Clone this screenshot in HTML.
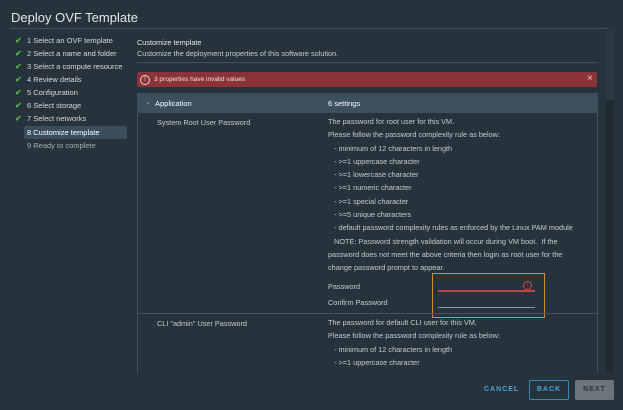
<!DOCTYPE html>
<html><head><style>
body{margin:0;width:623px;height:410px;background:#26333c;font-family:"Liberation Sans",sans-serif;color:#c9d1d6;overflow:hidden;position:relative}
.a{position:absolute;white-space:nowrap}
.s{font-size:7.5px;color:#d5dadd}
.ck{color:#5cb34a;font-size:8px;font-weight:bold}
.t{font-size:7.3px;color:#c5ccd1}
</style></head><body>
<div class="a" style="left:11px;top:10px;font-size:13px;color:#e3e7ea">Deploy OVF Template</div>
<div class="a" style="left:10px;top:28px;width:598px;height:1px;background:#44525c"></div>
<div class="a" style="left:24px;top:126px;width:103px;height:13px;background:#3a4e5e;border-radius:2px"></div>
<div class="a ck" style="left:15px;top:36px">✔</div><div class="a s" style="left:27px;top:36px">1 Select an OVF template</div>
<div class="a ck" style="left:15px;top:49px">✔</div><div class="a s" style="left:27px;top:49px">2 Select a name and folder</div>
<div class="a ck" style="left:15px;top:62px">✔</div><div class="a s" style="left:27px;top:62px">3 Select a compute resource</div>
<div class="a ck" style="left:15px;top:75px">✔</div><div class="a s" style="left:27px;top:75px">4 Review details</div>
<div class="a ck" style="left:15px;top:88px">✔</div><div class="a s" style="left:27px;top:88px">5 Configuration</div>
<div class="a ck" style="left:15px;top:101px">✔</div><div class="a s" style="left:27px;top:101px">6 Select storage</div>
<div class="a ck" style="left:15px;top:114px">✔</div><div class="a s" style="left:27px;top:114px">7 Select networks</div>
<div class="a s" style="left:27px;top:128px;color:#fff">8 Customize template</div>
<div class="a s" style="left:27px;top:141px;color:#a7b0b6">9 Ready to complete</div>

<div class="a" style="left:137px;top:38px;font-size:7.3px;color:#e3e7ea">Customize template</div>
<div class="a t" style="left:137px;top:49px">Customize the deployment properties of this software solution.</div>
<div class="a" style="left:137px;top:62px;width:460px;height:1px;background:#44525c"></div>
<div class="a" style="left:137px;top:72px;width:460px;height:15px;background:#8a3338;border-radius:2px"></div>
<div class="a" style="left:140px;top:75px;width:8px;height:8px;border:1px solid #f0d0d0;border-radius:50%;font-size:7px;color:#f0d0d0;text-align:center;line-height:8px">!</div>
<div class="a" style="left:154px;top:76px;font-size:6.5px;color:#f2e0e0">3 properties have invalid values</div>
<div class="a" style="left:587px;top:73px;font-size:10px;color:#e8c8c8">×</div>

<div class="a" style="left:137px;top:93px;width:459px;height:280px;border:1px solid #44535e;border-bottom:none"></div>
<div class="a" style="left:137px;top:93px;width:461px;height:20px;background:#3b4f5f"></div>
<div class="a" style="left:145px;top:98px;font-size:7px;color:#aab">⌄</div>
<div class="a" style="left:155px;top:99px;font-size:7.5px;color:#fff">Application</div>
<div class="a" style="left:328px;top:99px;font-size:7.5px;color:#fff">6 settings</div>
<div class="a t" style="left:157px;top:118px">System Root User Password</div>
<div class="a t" style="left:328px;top:115px;line-height:13.3px">The password for root user for this VM.<br>Please follow the password complexity rule as below:<br>&nbsp;&nbsp;&nbsp;- minimum of 12 characters in length<br>&nbsp;&nbsp;&nbsp;- &gt;=1 uppercase character<br>&nbsp;&nbsp;&nbsp;- &gt;=1 lowercase character<br>&nbsp;&nbsp;&nbsp;- &gt;=1 numeric character<br>&nbsp;&nbsp;&nbsp;- &gt;=1 special character<br>&nbsp;&nbsp;&nbsp;- &gt;=5 unique characters<br>&nbsp;&nbsp;&nbsp;- default password complexity rules as enforced by the Linux PAM module<br>&nbsp;&nbsp;&nbsp;NOTE: Password strength validation will occur during VM boot.&nbsp; If the<br>password does not meet the above criteria then login as root user for the<br>change password prompt to appear.</div>
<div class="a t" style="left:328px;top:282px">Password</div>
<div class="a t" style="left:328px;top:298px">Confirm Password</div>
<div class="a" style="left:432px;top:273px;width:111px;height:43px;border:1.5px solid #e08a22"></div>
<div class="a" style="left:438px;top:290px;width:97px;height:1.5px;background:#c0473f"></div>
<div class="a" style="left:523px;top:281px;width:7px;height:7px;border:1px solid #d6493f;border-radius:50%;font-size:6px;color:#d6493f;text-align:center;line-height:7px">!</div>
<div class="a" style="left:438px;top:307px;width:97px;height:1px;background:#8a969e"></div>
<div class="a" style="left:137px;top:313px;width:460px;height:1px;background:#44535e"></div>
<div class="a t" style="left:157px;top:319px">CLI "admin" User Password</div>
<div class="a t" style="left:328px;top:316px;line-height:13.3px">The password for default CLI user for this VM.<br>Please follow the password complexity rule as below:<br>&nbsp;&nbsp;&nbsp;- minimum of 12 characters in length<br>&nbsp;&nbsp;&nbsp;- &gt;=1 uppercase character</div>
<div class="a" style="left:137px;top:373px;width:461px;height:37px;background:#26333c"></div>
<div class="a" style="left:606px;top:30px;width:8px;height:343px;background:#1f2a31"></div>
<div class="a" style="left:606px;top:30px;width:8px;height:70px;background:#2c3942"></div>

<div class="a" style="left:484px;top:386px;font-size:7px;letter-spacing:1px;color:#4aa3d8;font-weight:bold">CANCEL</div>
<div class="a" style="left:529px;top:380px;width:38px;height:18px;border:1px solid #3b88b8;border-radius:2px;font-size:7px;letter-spacing:1px;color:#4aa3d8;font-weight:bold;text-align:center;line-height:18px">BACK</div>
<div class="a" style="left:575px;top:380px;width:39px;height:20px;background:#6c757b;border-radius:2px;font-size:7px;letter-spacing:1px;color:#2a343b;font-weight:bold;text-align:center;line-height:20px">NEXT</div>
</body></html>
